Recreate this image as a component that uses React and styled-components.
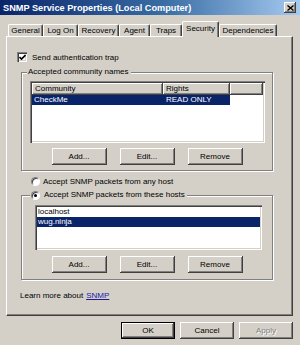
import React from 'react'
import styled, { createGlobalStyle } from 'styled-components'

const GlobalStyle = createGlobalStyle`
  html, body { margin:0; padding:0; background:#d4d0c8; }
  body { font-family:"Liberation Sans", Arial, sans-serif; font-size:8px; color:#000; }
`

const Window = styled.div`
  width:300px;
  height:345px;
  background:#d4d0c8;
  display:flex;
  flex-direction:column;
  overflow:hidden;
`

const TitleBar = styled.div`
  height:15px;
  flex:none;
  display:flex;
  align-items:center;
  padding:0 4px 0 3px;
  background:linear-gradient(to right, #0a246a 0%, #3a6ea5 55%, #a6caf0 100%);
  color:#fff;
  font-weight:bold;
  font-size:9.2px;
`

const TitleText = styled.span`
  flex:1;
  white-space:nowrap;
`

const CloseBtn = styled.div`
  width:12px;
  height:11px;
  box-sizing:border-box;
  background:#d4d0c8;
  box-shadow:inset -1px -1px #404040, inset 1px 1px #fff, inset -2px -2px #808080;
  display:flex;
  align-items:center;
  justify-content:center;
`

const TabStrip = styled.div`
  display:flex;
  align-items:flex-end;
  height:15px;
  margin-top:6px;
  padding-left:8px;
  position:relative;
  z-index:1;
`

const Tab = styled.div`
  width:${p => p.$w}px;
  height:${p => (p.$active ? 16 : 12)}px;
  margin-bottom:${p => (p.$active ? -1 : 0)}px;
  box-sizing:border-box;
  background:#d4d0c8;
  border-left:1px solid #fff;
  border-top:1px solid #fff;
  border-right:1px solid #404040;
  border-radius:2px 2px 0 0;
  box-shadow:inset -1px 0 #808080;
  display:flex;
  align-items:center;
  justify-content:center;
  padding-bottom:${p => (p.$active ? 3 : 0)}px;
  white-space:nowrap;
`

const Panel = styled.div`
  width:287px;
  height:280px;
  margin-left:6px;
  box-sizing:border-box;
  border-left:1px solid #fff;
  border-top:1px solid #fff;
  border-right:1px solid #404040;
  border-bottom:1px solid #404040;
  box-shadow:inset -1px -1px #808080;
  display:flex;
  flex-direction:column;
  flex:none;
`

const Row = styled.div`
  display:flex;
  align-items:center;
  height:10px;
  gap:${p => p.$gap || 5}px;
  margin-top:${p => p.$top || 0}px;
  margin-left:${p => p.$left || 0}px;
  white-space:nowrap;
`

const CheckBox = styled.span`
  width:10px;
  height:10px;
  box-sizing:border-box;
  background:#fff;
  box-shadow:inset 1px 1px #808080, inset 2px 2px #404040, inset -1px -1px #fff, inset -2px -2px #d4d0c8;
  display:flex;
  align-items:center;
  justify-content:center;
`

const Radio = styled.span`
  width:9px;
  height:9px;
  box-sizing:border-box;
  border-radius:50%;
  background:#fff;
  border:1px solid;
  border-color:#808080 #fff #fff #808080;
  box-shadow:inset 1px 1px #404040;
  display:flex;
  align-items:center;
  justify-content:center;
  flex:none;
  &::after {
    content:'';
    width:3px;
    height:3px;
    border-radius:50%;
    background:${p => (p.$on ? '#000' : 'transparent')};
  }
`

const Group = styled.fieldset`
  width:252px;
  margin:${p => p.$top}px 0 0 14px;
  padding:0 0 ${p => p.$bottom}px 0;
  box-sizing:border-box;
  min-width:0;
  border:1px solid #808080;
  box-shadow:inset 1px 1px #fff, 1px 1px #fff;
`

const Legend = styled.legend`
  margin-left:${p => p.$left}px;
  padding:0 2px 0 1px;
  height:10px;
  line-height:10px;
  background:#d4d0c8;
  display:flex;
  align-items:center;
  gap:4px;
  white-space:nowrap;
`

const ListView = styled.div`
  width:235px;
  height:62px;
  margin:4px 0 0 8px;
  box-sizing:border-box;
  padding:2px;
  background:#fff;
  box-shadow:inset 1px 1px #808080, inset 2px 2px #404040, inset -1px -1px #fff, inset -2px -2px #d4d0c8;
`

const HeaderRow = styled.div`
  display:flex;
  height:12px;
`

const HeaderCell = styled.div`
  width:${p => p.$w}px;
  flex:${p => (p.$w ? 'none' : 1)};
  box-sizing:border-box;
  background:#d4d0c8;
  padding-left:3px;
  line-height:11px;
  box-shadow:inset -1px -1px #404040, inset 1px 1px #fff, inset -2px -2px #808080;
`

const ItemRow = styled.div`
  display:flex;
  width:${p => (p.$w ? `${p.$w}px` : 'auto')};
  height:10px;
  line-height:10px;
  background:${p => (p.$sel ? '#0a246a' : 'transparent')};
  color:${p => (p.$sel ? '#fff' : '#000')};
`

const Cell = styled.div`
  width:${p => p.$w}px;
  padding-left:${p => p.$pad || 2}px;
  box-sizing:border-box;
  white-space:nowrap;
`

const ListBox = styled.div`
  width:227px;
  height:45px;
  margin:5px 0 0 13px;
  box-sizing:border-box;
  padding:2px 2px 2px 2px;
  background:#fff;
  box-shadow:inset 1px 1px #808080, inset 2px 2px #404040, inset -1px -1px #fff, inset -2px -2px #d4d0c8;
`

const ButtonRow = styled.div`
  display:flex;
  justify-content:${p => p.$justify || 'center'};
  gap:${p => p.$gap || 13}px;
  margin-top:${p => p.$top || 0}px;
  padding-right:${p => p.$right || 0}px;
`

const Button = styled.button`
  width:${p => p.$w || 55}px;
  height:17px;
  box-sizing:border-box;
  margin:0;
  padding:0;
  border:none;
  background:#d4d0c8;
  font:inherit;
  color:${p => (p.disabled ? '#808080' : '#000')};
  text-shadow:${p => (p.disabled ? '1px 1px #fff' : 'none')};
  box-shadow:${p =>
    p.$default
      ? 'inset 0 0 0 1px #000, inset -2px -2px #404040, inset 2px 2px #fff, inset -3px -3px #808080'
      : 'inset -1px -1px #404040, inset 1px 1px #fff, inset -2px -2px #808080'};
`

const Link = styled.a`
  color:#1a1aa6;
  text-decoration:underline;
`

const tabs = [
  ['General', 35],
  ['Log On', 35],
  ['Recovery', 41],
  ['Agent', 31],
  ['Traps', 32],
  ['Security', 37],
  ['Dependencies', 58],
]

export default function App() {
  return (
    <Window>
      <GlobalStyle />
      <TitleBar>
        <TitleText>SNMP Service Properties (Local Computer)</TitleText>
        <CloseBtn>
          <svg width="7" height="6" viewBox="0 0 7 6">
            <path d="M0.5 0.5 L6.5 5.5 M6.5 0.5 L0.5 5.5" stroke="#000" strokeWidth="1.4" />
          </svg>
        </CloseBtn>
      </TitleBar>

      <TabStrip>
        {tabs.map(([name, w]) => (
          <Tab key={name} $w={w} $active={name === 'Security'}>{name}</Tab>
        ))}
      </TabStrip>

      <Panel>
        <Row $top={15} $left={10}>
          <CheckBox>
            <svg width="7" height="7" viewBox="0 0 7 7">
              <path d="M0.5 3 L2.5 5 L6.5 1" stroke="#000" strokeWidth="1.6" fill="none" />
            </svg>
          </CheckBox>
          Send authentication trap
        </Row>

        <Group $top={5} $bottom={5}>
          <Legend $left={5}>Accepted community names</Legend>
          <ListView>
            <HeaderRow>
              <HeaderCell $w={131}>Community</HeaderCell>
              <HeaderCell $w={67}>Rights</HeaderCell>
              <HeaderCell />
            </HeaderRow>
            <ItemRow $sel $w={198}>
              <Cell $w={131}>CheckMe</Cell>
              <Cell $w={67} $pad={3}>READ ONLY</Cell>
            </ItemRow>
          </ListView>
          <ButtonRow $top={5}>
            <Button>Add...</Button>
            <Button>Edit...</Button>
            <Button>Remove</Button>
          </ButtonRow>
        </Group>

        <Row $top={5} $left={24} $gap={3}>
          <Radio />
          Accept SNMP packets from any host
        </Row>

        <Group $top={4} $bottom={6}>
          <Legend $left={8}>
            <Radio $on />
            Accept SNMP packets from these hosts
          </Legend>
          <ListBox>
            <ItemRow><Cell $w={200} $pad={1}>localhost</Cell></ItemRow>
            <ItemRow $sel><Cell $w={200} $pad={1}>wug.ninja</Cell></ItemRow>
          </ListBox>
          <ButtonRow $top={6}>
            <Button>Add...</Button>
            <Button>Edit...</Button>
            <Button>Remove</Button>
          </ButtonRow>
        </Group>

        <Row $top={10} $left={13} $gap={3}>
          <span>Learn more about</span>
          <Link href="#">SNMP</Link>
        </Row>
      </Panel>

      <ButtonRow $top={6} $justify="flex-end" $gap={5} $right={7}>
        <Button $w={54} $default>OK</Button>
        <Button $w={54}>Cancel</Button>
        <Button $w={54} disabled>Apply</Button>
      </ButtonRow>
    </Window>
  )
}
